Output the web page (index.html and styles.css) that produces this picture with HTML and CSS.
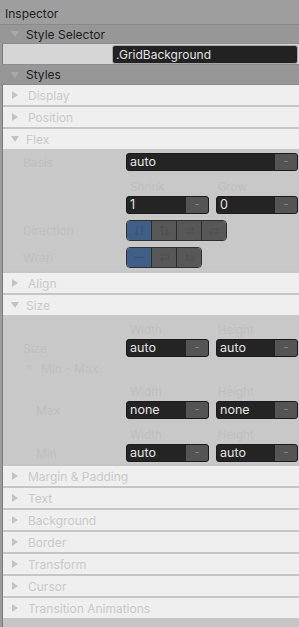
FILE: index.html
```html
<!DOCTYPE html>
<html lang="en">
<head>
    <meta charset="UTF-8">
    <meta name="viewport" content="width=device-width, initial-scale=1.0">
    <title>Inspector</title>
    <link rel="stylesheet" href="styles.css">
</head>
<body>
    <div class="inspector">
        <div class="title">Inspector</div>

        <div class="group-head"><span class="arrow-down"></span>Style Selector</div>
        <div class="selector-row">
            <div class="selector-input">.GridBackground</div>
        </div>

        <div class="group-head styles-head"><span class="arrow-down"></span>Styles</div>

        <div class="sections">
            <div class="section"><div class="section-head"><span class="arrow-right"></span>Display</div></div>
            <div class="section"><div class="section-head"><span class="arrow-right"></span>Position</div></div>

            <div class="section">
                <div class="section-head"><span class="arrow-down"></span>Flex</div>
                <div class="section-body flex-body">
                    <div class="field-row">
                        <div class="field-label">Basis</div>
                        <div class="input wide"><span class="input-text">auto</span><span class="input-btn">-</span></div>
                    </div>
                    <div class="caption-row gap-7">
                        <span class="caption">Shrink</span>
                        <span class="caption">Grow</span>
                    </div>
                    <div class="field-row">
                        <div class="field-label"></div>
                        <div class="input"><span class="input-text">1</span><span class="input-btn">-</span></div>
                        <div class="input"><span class="input-text">0</span><span class="input-btn">-</span></div>
                    </div>
                    <div class="field-row tall gap-6">
                        <div class="field-label">Direction</div>
                        <div class="btn-group">
                            <span class="btn active">
                                <svg width="11" height="11" viewBox="0 0 11 11"><path d="M3 1v9M8 1v9M1 8l2 2 2-2M6 3l2-2 2 2" fill="none" stroke="#37547d" stroke-width="1.2"/></svg>
                            </span>
                            <span class="btn">
                                <svg width="11" height="11" viewBox="0 0 11 11"><path d="M3 1v9M8 1v9M1 3l2-2 2 2M6 8l2 2 2-2" fill="none" stroke="#4f4f4f" stroke-width="1.2"/></svg>
                            </span>
                            <span class="btn">
                                <svg width="11" height="11" viewBox="0 0 11 11"><path d="M1 4h9M1 8h9M8 2l2 2-2 2" fill="none" stroke="#4f4f4f" stroke-width="1.2"/></svg>
                            </span>
                            <span class="btn">
                                <svg width="11" height="11" viewBox="0 0 11 11"><path d="M1 4h9M1 8h9M3 6l-2 2 2 2" fill="none" stroke="#4f4f4f" stroke-width="1.2"/></svg>
                            </span>
                        </div>
                    </div>
                    <div class="field-row tall gap-6">
                        <div class="field-label">Wrap</div>
                        <div class="btn-group">
                            <span class="btn active">
                                <svg width="11" height="11" viewBox="0 0 11 11"><path d="M1 5.5h9" fill="none" stroke="#37547d" stroke-width="1.4"/></svg>
                            </span>
                            <span class="btn">
                                <svg width="11" height="11" viewBox="0 0 11 11"><path d="M1 3h7a2 2 0 0 1 0 4H3M4 5l-2 2 2 2" fill="none" stroke="#4f4f4f" stroke-width="1.2"/></svg>
                            </span>
                            <span class="btn">
                                <svg width="11" height="11" viewBox="0 0 11 11"><path d="M1 8h7a2 2 0 0 0 0-4H3M4 6l-2-2 2-2" fill="none" stroke="#4f4f4f" stroke-width="1.2"/></svg>
                            </span>
                        </div>
                    </div>
                </div>
            </div>

            <div class="section"><div class="section-head"><span class="arrow-right"></span>Align</div></div>

            <div class="section">
                <div class="section-head"><span class="arrow-down"></span>Size</div>
                <div class="section-body size-body">
                    <div class="caption-row">
                        <span class="caption">Width</span>
                        <span class="caption">Height</span>
                    </div>
                    <div class="field-row">
                        <div class="field-label">Size</div>
                        <div class="input"><span class="input-text">auto</span><span class="input-btn">-</span></div>
                        <div class="input"><span class="input-text">auto</span><span class="input-btn">-</span></div>
                    </div>
                    <div class="sub-head"><span class="arrow-down"></span>Min - Max</div>
                    <div class="caption-row gap-4">
                        <span class="caption">Width</span>
                        <span class="caption">Height</span>
                    </div>
                    <div class="field-row">
                        <div class="field-label sub">Max</div>
                        <div class="input"><span class="input-text">none</span><span class="input-btn">-</span></div>
                        <div class="input"><span class="input-text">none</span><span class="input-btn">-</span></div>
                    </div>
                    <div class="caption-row gap-7">
                        <span class="caption">Width</span>
                        <span class="caption">Height</span>
                    </div>
                    <div class="field-row">
                        <div class="field-label sub">Min</div>
                        <div class="input"><span class="input-text">auto</span><span class="input-btn">-</span></div>
                        <div class="input"><span class="input-text">auto</span><span class="input-btn">-</span></div>
                    </div>
                </div>
            </div>

            <div class="section"><div class="section-head"><span class="arrow-right"></span>Margin &amp; Padding</div></div>
            <div class="section"><div class="section-head"><span class="arrow-right"></span>Text</div></div>
            <div class="section"><div class="section-head"><span class="arrow-right"></span>Background</div></div>
            <div class="section"><div class="section-head"><span class="arrow-right"></span>Border</div></div>
            <div class="section"><div class="section-head"><span class="arrow-right"></span>Transform</div></div>
            <div class="section"><div class="section-head"><span class="arrow-right"></span>Cursor</div></div>
            <div class="section"><div class="section-head"><span class="arrow-right"></span>Transition Animations</div></div>
        </div>
    </div>
</body>
</html>
```

FILE: styles.css
```css
html, body {
    height: 100%;
}
body {
    margin: 0;
    padding: 0;
    font-family: Inter, "Noto Sans", sans-serif;
    font-size: 12px;
    background-color: #9c9c9c;
    color: #1e1e1e;
}
.inspector {
    display: flex;
    flex-direction: column;
    height: 100%;
}
.title {
    height: 24px;
    line-height: 27px;
    padding-left: 5px;
    background-color: #9e9e9e;
    border-bottom: 1px solid #8a8a8a;
}
.group-head {
    display: flex;
    align-items: center;
    height: 18px;
    padding-left: 11px;
    background-color: #979797;
}
.styles-head {
    height: 19px;
    border-bottom: 1px solid #8c8c8c;
}
.selector-row {
    display: flex;
    justify-content: flex-end;
    align-items: center;
    height: 22px;
    margin-left: 2px;
    border-left: 1px solid #7a7a7a;
    padding-right: 1px;
    background-color: #d6d6d6;
    border-top: 1px solid #8e8e8e;
    border-bottom: 1px solid #8e8e8e;
    box-sizing: border-box;
}
.selector-input {
    width: 186px;
    height: 19px;
    line-height: 18px;
    box-sizing: border-box;
    padding-left: 3px;
    background-color: #222;
    color: #e2e2e2;
    border: 1px solid #a8a8a8;
    border-radius: 3px;
}

/* triangles */
.arrow-right, .arrow-down {
    display: inline-block;
    width: 0;
    height: 0;
}
.arrow-right {
    border-left: 6px solid #c4c4c4;
    border-top: 4px solid transparent;
    border-bottom: 4px solid transparent;
    margin-left: 1px;
    margin-right: 10px;
}
.arrow-down {
    border-top: 6px solid #a9a9a9;
    border-left: 4px solid transparent;
    border-right: 4px solid transparent;
    margin-right: 7px;
}
.section-head .arrow-down, .sub-head .arrow-down {
    border-top-color: #c4c4c4;
}

.sections {
    flex: 1;
    margin-left: 2px;
    border-left: 1px solid #7a7a7a;
    background-color: #c6c6c6;
}
.section {
    border-bottom: 2px solid #c6c6c6;
}
.section-head {
    display: flex;
    align-items: center;
    height: 20px;
    padding-left: 8px;
    background-color: #efefef;
    color: #cacaca;
}
.section-body {
    background-color: #c8c8c8;
    color: #bfbfbf;
}
.flex-body {
    padding: 4px 0 3px;
}
.size-body {
    padding: 6px 0 2px;
}

.field-row {
    display: flex;
    align-items: center;
    gap: 7px;
    height: 18px;
}
.field-row.tall {
    height: 21px;
}
.field-label {
    width: 103px;
    margin-right: -7px;
    padding-left: 20px;
}
.field-label.sub {
    padding-left: 33px;
    width: 90px;
}
.caption-row {
    display: flex;
    gap: 7px;
    height: 18px;
    line-height: 18px;
    padding-left: 127px;
    font-size: 11.5px;
}
.caption {
    width: 85px;
}
.gap-4 { margin-top: 4px; }
.gap-6 { margin-top: 6px; }
.gap-7 { margin-top: 7px; }

.sub-head {
    display: flex;
    align-items: center;
    height: 22px;
    padding-left: 22px;
}
.sub-head .arrow-down {
    margin-right: 8px;
}

.input {
    display: flex;
    width: 83px;
    height: 18px;
    box-sizing: border-box;
    background-color: #242424;
    border: 1px solid #1b1b1b;
    border-radius: 3px;
    overflow: hidden;
}
.input + .input {
    width: 82px;
}
.input.wide {
    width: 172px;
}
.input-text {
    flex: 1;
    padding-left: 3px;
    line-height: 16px;
    color: #e4e4e4;
    font-size: 12.5px;
}
.input-btn {
    width: 22px;
    background-color: #545454;
    color: #858585;
    text-align: center;
    line-height: 15px;
    font-size: 11px;
}

.btn-group {
    display: flex;
    height: 21px;
    border: 1px solid #303030;
    border-radius: 4px;
    overflow: hidden;
    box-sizing: border-box;
}
.btn {
    display: flex;
    align-items: center;
    justify-content: center;
    width: 24px;
    background-color: #575757;
    border-left: 1px solid #2c2c2c;
}
.btn:first-child {
    border-left: none;
}
.btn.active {
    background-color: #3f5f87;
}
```
